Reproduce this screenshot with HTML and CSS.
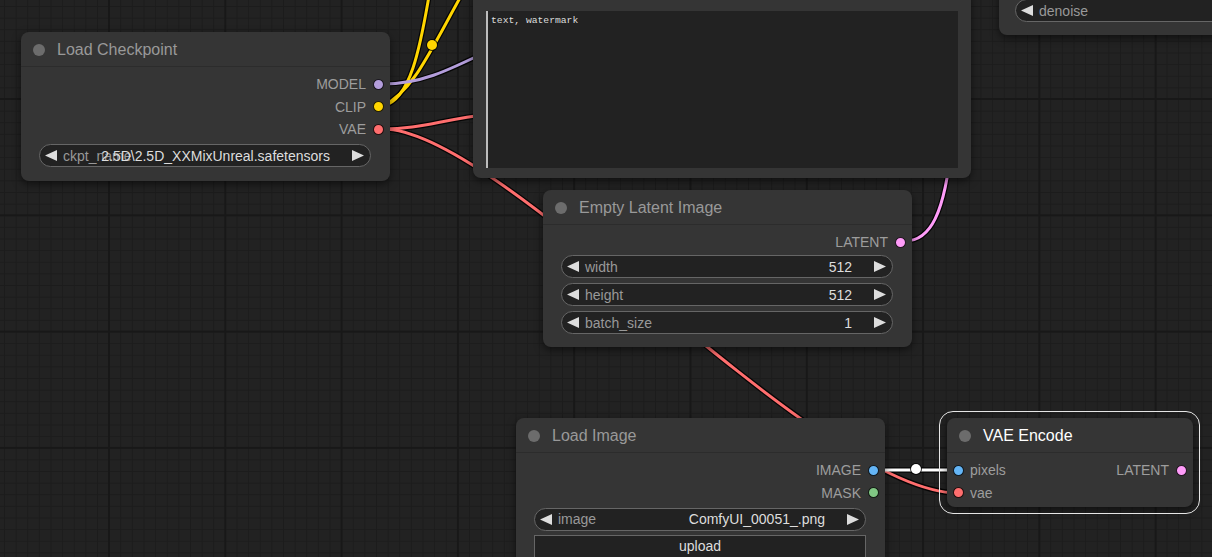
FILE: index.html
```html
<!DOCTYPE html>
<html>
<head>
<meta charset="utf-8">
<link rel="stylesheet" href="styles.css">
</head>
<body>
<div class="canvas">
  <svg class="links" width="1212" height="557" viewBox="0 0 1212 557">
    <g class="outline">
      <path d="M383,106 C410,100 420,50 430,-10"/>
      <path d="M383,106 C415,90 430,50 470,-20"/>
      <path d="M383,84 C420,84 445,72 490,50"/>
      <path d="M383,129 C420,129 440,120 490,114"/>
      <path d="M383,129 C503,129 818,493 958,493"/>
      <path d="M905,241 C930,241 945,215 952,140"/>
      <path d="M884,470 L958,470"/>
    </g>
    <path class="l-clip" d="M383,106 C410,100 420,50 430,-10"/>
    <path class="l-clip" d="M383,106 C415,90 430,50 470,-20"/>
    <circle class="m-out" cx="432" cy="45" r="6"/>
    <circle class="m-clip" cx="432" cy="45" r="5"/>
    <path class="l-model" d="M383,84 C420,84 445,72 490,50"/>
    <path class="l-vae" d="M383,129 C420,129 440,120 490,114"/>
    <path class="l-vae" d="M383,129 C503,129 818,493 958,493"/>
    <path class="l-latent" d="M905,241 C930,241 945,215 952,140"/>
    <path class="l-white" d="M884,470 L958,470"/>
    <circle class="m-out" cx="916" cy="469" r="6"/>
    <circle class="m-white" cx="916" cy="469" r="5"/>
  </svg>

  <div class="node n-ks">
    <div class="widget wide">
      <svg class="arr" viewBox="0 0 12 11"><polygon points="12,0 12,11 0,5.5"/></svg>
      <span class="w-label">denoise</span>
      <span class="w-value">1.00</span>
      <svg class="arr" viewBox="0 0 12 11"><polygon points="0,0 0,11 12,5.5"/></svg>
    </div>
  </div>

  <div class="node n-clip">
    <textarea class="prompt" spellcheck="false">text, watermark</textarea>
  </div>

  <div class="node n-ckpt">
    <div class="title"><span class="tdot"></span><span>Load Checkpoint</span></div>
    <div class="body">
      <div class="outs">
        <div class="out"><span>MODEL</span><span class="dot c-model"></span></div>
        <div class="out"><span>CLIP</span><span class="dot c-clip"></span></div>
        <div class="out"><span>VAE</span><span class="dot c-vae"></span></div>
      </div>
      <div class="widgets">
        <div class="widget">
          <svg class="arr" viewBox="0 0 12 11"><polygon points="12,0 12,11 0,5.5"/></svg>
          <span class="w-label">ckpt_name</span>
          <span class="w-value">2.5D\2.5D_XXMixUnreal.safetensors</span>
          <svg class="arr" viewBox="0 0 12 11"><polygon points="0,0 0,11 12,5.5"/></svg>
        </div>
      </div>
    </div>
  </div>

  <div class="node n-latent">
    <div class="title"><span class="tdot"></span><span>Empty Latent Image</span></div>
    <div class="body">
      <div class="outs">
        <div class="out"><span>LATENT</span><span class="dot c-latent"></span></div>
      </div>
      <div class="widgets tight">
        <div class="widget">
          <svg class="arr" viewBox="0 0 12 11"><polygon points="12,0 12,11 0,5.5"/></svg>
          <span class="w-label">width</span>
          <span class="w-value">512</span>
          <svg class="arr" viewBox="0 0 12 11"><polygon points="0,0 0,11 12,5.5"/></svg>
        </div>
        <div class="widget">
          <svg class="arr" viewBox="0 0 12 11"><polygon points="12,0 12,11 0,5.5"/></svg>
          <span class="w-label">height</span>
          <span class="w-value">512</span>
          <svg class="arr" viewBox="0 0 12 11"><polygon points="0,0 0,11 12,5.5"/></svg>
        </div>
        <div class="widget">
          <svg class="arr" viewBox="0 0 12 11"><polygon points="12,0 12,11 0,5.5"/></svg>
          <span class="w-label">batch_size</span>
          <span class="w-value">1</span>
          <svg class="arr" viewBox="0 0 12 11"><polygon points="0,0 0,11 12,5.5"/></svg>
        </div>
      </div>
    </div>
  </div>

  <div class="node n-loadimg">
    <div class="title"><span class="tdot"></span><span>Load Image</span></div>
    <div class="body">
      <div class="outs">
        <div class="out"><span>IMAGE</span><span class="dot c-image"></span></div>
        <div class="out"><span>MASK</span><span class="dot c-mask"></span></div>
      </div>
      <div class="widgets">
        <div class="widget">
          <svg class="arr" viewBox="0 0 12 11"><polygon points="12,0 12,11 0,5.5"/></svg>
          <span class="w-label">image</span>
          <span class="w-value">ComfyUI_00051_.png</span>
          <svg class="arr" viewBox="0 0 12 11"><polygon points="0,0 0,11 12,5.5"/></svg>
        </div>
        <div class="button">upload</div>
      </div>
    </div>
  </div>

  <div class="node n-vae selected">
    <div class="title"><span class="tdot"></span><span>VAE Encode</span></div>
    <div class="body io">
      <div class="ins">
        <div class="in"><span class="dot c-image"></span><span>pixels</span></div>
        <div class="in"><span class="dot c-vae"></span><span>vae</span></div>
      </div>
      <div class="outs">
        <div class="out"><span>LATENT</span><span class="dot c-latent"></span></div>
      </div>
    </div>
  </div>
</div>
</body>
</html>
```

FILE: styles.css
```css
html, body {
  margin: 0;
  padding: 0;
  width: 1212px;
  height: 557px;
  overflow: hidden;
  background: #222222;
}

.canvas {
  position: relative;
  width: 1212px;
  height: 557px;
  overflow: hidden;
  font-family: "Liberation Sans", Arial, sans-serif;
  background-color: #222222;
  background-image:
    linear-gradient(to right, #181818 2px, transparent 2px),
    linear-gradient(to bottom, #181818 2px, transparent 2px),
    linear-gradient(to right, #1c1c1c 1px, transparent 1px),
    linear-gradient(to bottom, #1c1c1c 1px, transparent 1px);
  background-size: 116.3px 116.3px, 116.3px 116.3px, 11.63px 11.63px, 11.63px 11.63px;
  background-position: 108px 0, 0 98px, 4px 0, 0 6px;
}

.links {
  position: absolute;
  left: 0;
  top: 0;
  z-index: 0;
}

.links path {
  fill: none;
  stroke-linecap: round;
}

.outline path {
  stroke: #000;
  stroke-opacity: 0.85;
  stroke-width: 5.5;
}

.l-clip { stroke: #ffd500; stroke-width: 3; }
.l-model { stroke: #b39ddb; stroke-width: 3; }
.l-vae { stroke: #ff6e6e; stroke-width: 3; }
.l-latent { stroke: #ff9cf9; stroke-width: 3; }
.l-white { stroke: #ffffff; stroke-width: 3; }
.m-out { fill: #000; fill-opacity: 0.8; }
.m-clip { fill: #ffd500; }
.m-white { fill: #ffffff; }

.node {
  position: absolute;
  z-index: 1;
  box-sizing: border-box;
  background: #353535;
  border-radius: 8px;
  box-shadow: 0 3px 8px rgba(0, 0, 0, 0.55);
  display: flex;
  flex-direction: column;
  font-size: 14px;
  color: #999;
}

.n-ckpt { left: 21px; top: 32px; width: 369px; }
.n-latent { left: 543px; top: 190px; width: 369px; }
.n-loadimg { left: 516px; top: 418px; width: 369px; height: 200px; }
.n-vae { left: 947px; top: 418px; width: 246px; }
.n-clip {
  left: 473px;
  top: -10px;
  width: 498px;
  height: 188px;
  padding: 21px 13px 10px;
}
.n-ks {
  left: 999px;
  top: -60px;
  width: 400px;
  height: 95px;
  justify-content: flex-end;
  padding: 0 0 13px 16px;
}

.selected::after {
  content: "";
  position: absolute;
  left: -8px;
  top: -7px;
  right: -7px;
  bottom: -7px;
  border: 1px solid #e6e6e6;
  border-radius: 14px;
  pointer-events: none;
}

.title {
  height: 35px;
  box-sizing: border-box;
  border-bottom: 1px solid #2c2c2c;
  display: flex;
  align-items: center;
  gap: 12.5px;
  padding-left: 11.5px;
  padding-top: 2px;
  font-size: 16px;
  color: #999;
  white-space: nowrap;
}

.selected .title { color: #ffffff; }

.tdot {
  width: 12px;
  height: 12px;
  border-radius: 50%;
  background: #6c6c6c;
  flex: none;
}

.body {
  padding: 6px 0 14px;
  display: flex;
  flex-direction: column;
}

.n-latent .body { padding-bottom: 13px; }

.body.io {
  flex-direction: row;
  justify-content: space-between;
  padding-bottom: 3px;
}

.outs, .ins {
  display: flex;
  flex-direction: column;
}

.out, .in {
  height: 22.5px;
  display: flex;
  align-items: center;
  gap: 6.5px;
  color: #9d9d9d;
  white-space: nowrap;
}

.out {
  justify-content: flex-end;
  padding-right: 6.5px;
}

.in {
  padding-left: 5.5px;
}

.dot {
  width: 11px;
  height: 11px;
  box-sizing: border-box;
  border-radius: 50%;
  border: 1px solid rgba(0, 0, 0, 0.85);
  flex: none;
}

.c-model { background: #b39ddb; }
.c-clip { background: #ffd500; }
.c-vae { background: #ff6e6e; }
.c-latent { background: #ff9cf9; }
.c-image { background: #64b5f6; }
.c-mask { background: #81c784; }

.widgets {
  display: flex;
  flex-direction: column;
  gap: 5px;
  margin: 3.5px 19px 0 18px;
}

.widgets.tight { margin-top: 1.5px; }

.widget {
  height: 23px;
  box-sizing: border-box;
  border: 1px solid #666;
  border-radius: 12px;
  background: #222;
  display: flex;
  align-items: center;
  padding: 0 6px 0 5px;
  font-size: 14px;
  white-space: nowrap;
}

.widget.wide {
  width: 420px;
  flex: none;
}

.arr {
  width: 12px;
  height: 11px;
  flex: none;
  fill: #dddddd;
}

.w-label {
  width: 0;
  overflow: visible;
  margin-left: 6px;
  color: #999;
}

.w-value {
  margin-left: auto;
  margin-right: 22px;
  color: #dddddd;
}

.button {
  height: 23px;
  box-sizing: border-box;
  border: 1px solid #666;
  background: #222;
  color: #dddddd;
  display: flex;
  align-items: center;
  justify-content: center;
  font-size: 14px;
  margin-top: -1px;
}

.prompt {
  flex: 1;
  margin: 0;
  box-sizing: border-box;
  background: #222222;
  border: none;
  border-left: 2px solid #bdbdbd;
  color: #dddddd;
  font-family: "Liberation Mono", "DejaVu Sans Mono", monospace;
  font-size: 9.7px;
  line-height: 14px;
  padding: 3px 3px;
  resize: none;
  outline: none;
  overflow: hidden;
}
```
